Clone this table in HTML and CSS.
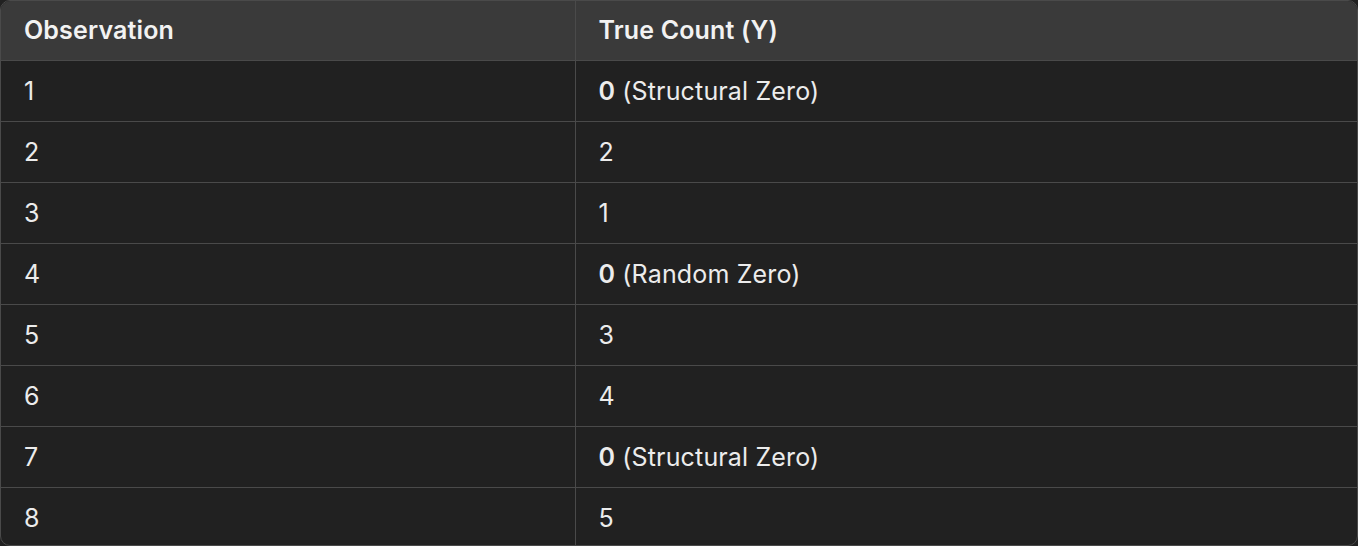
FILE: index.html
```html
<!DOCTYPE html>
<html>
<head>
<meta charset="utf-8">
<link rel="stylesheet" href="styles.css">
</head>
<body>
<div class="wrap">
<table class="tbl">
<thead>
<tr><th class="c1">Observation</th><th>True Count (Y)</th></tr>
</thead>
<tbody>
<tr><td class="c1">1</td><td><strong>0</strong> (Structural Zero)</td></tr>
<tr><td class="c1">2</td><td>2</td></tr>
<tr><td class="c1">3</td><td>1</td></tr>
<tr><td class="c1">4</td><td><strong>0</strong> (Random Zero)</td></tr>
<tr><td class="c1">5</td><td>3</td></tr>
<tr><td class="c1">6</td><td>4</td></tr>
<tr><td class="c1">7</td><td><strong>0</strong> (Structural Zero)</td></tr>
<tr class="last"><td class="c1">8</td><td>5</td></tr>
</tbody>
</table>
</div>
</body>
</html>
```
FILE: styles.css
```css
html, body {
  margin: 0;
  padding: 0;
  background: #212121;
}
.wrap {
  width: 1358px;
  height: 546px;
  box-sizing: border-box;
  border: 1px solid #4a4a4a;
  border-radius: 10px;
  overflow: hidden;
  background: #212121;
}
.tbl {
  width: 100%;
  border-collapse: collapse;
  font-family: Inter, "Noto Sans", sans-serif;
  font-size: 25px;
  letter-spacing: 0.15px;
  color: #ececec;
  table-layout: fixed;
}
.tbl th, .tbl td {
  text-align: left;
  padding: 0 23px;
  box-sizing: border-box;
  border-bottom: 1px solid #4a4a4a;
}
.tbl th {
  background: #3a3a3a;
  font-weight: 600;
  height: 59px;
  color: #f2f2f2;
}
.tbl td {
  height: 61px;
  font-weight: 400;
}
.tbl .c1 {
  width: 574px;
  border-right: 1px solid #4a4a4a;
}
.tbl strong {
  font-weight: 600;
}
.tbl tr.last td {
  border-bottom: none;
}
```
